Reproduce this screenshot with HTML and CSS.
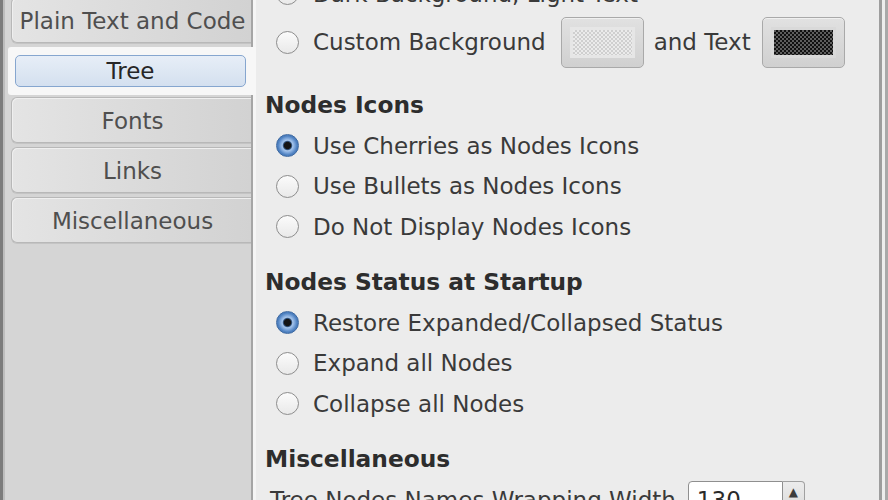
FILE: index.html
```html
<!DOCTYPE html>
<html>
<head>
<meta charset="utf-8">
<title>Preferences - Tree</title>
<link rel="stylesheet" href="styles.css">
</head>
<body>
<div class="window">
  <nav class="sidebar">
    <div class="tabs">
      <div class="tab">Plain Text and Code</div>
      <div class="tab active"><span class="focus">Tree</span></div>
      <div class="tab">Fonts</div>
      <div class="tab">Links</div>
      <div class="tab">Miscellaneous</div>
    </div>
  </nav>
  <main class="panel">
    <div class="scroll">
      <section class="group">
        <div class="radio-row"><span class="radio"></span><span>Dark Background, Light Text</span></div>
        <div class="radio-row tall">
          <span class="radio"></span><span>Custom Background</span>
          <span class="color-btn first-btn"><span class="swatch light"></span></span>
          <span class="and-text">and Text</span>
          <span class="color-btn second-btn"><span class="swatch dark"></span></span>
        </div>
      </section>
      <section class="group">
        <h2>Nodes Icons</h2>
        <div class="radio-row"><span class="radio on"></span><span>Use Cherries as Nodes Icons</span></div>
        <div class="radio-row"><span class="radio"></span><span>Use Bullets as Nodes Icons</span></div>
        <div class="radio-row"><span class="radio"></span><span>Do Not Display Nodes Icons</span></div>
      </section>
      <section class="group">
        <h2>Nodes Status at Startup</h2>
        <div class="radio-row"><span class="radio on"></span><span>Restore Expanded/Collapsed Status</span></div>
        <div class="radio-row"><span class="radio"></span><span>Expand all Nodes</span></div>
        <div class="radio-row"><span class="radio"></span><span>Collapse all Nodes</span></div>
      </section>
      <section class="group">
        <h2>Miscellaneous</h2>
        <div class="spin-row">
          <span>Tree Nodes Names Wrapping Width</span>
          <span class="spin"><span class="spin-entry">130</span><span class="spin-btn">&#9650;</span></span>
        </div>
      </section>
    </div>
  </main>
  <div class="edge"></div>
</div>
</body>
</html>
```

FILE: styles.css
```css
html, body {
  margin: 0;
  padding: 0;
}
body {
  width: 888px;
  height: 500px;
  overflow: hidden;
  background: #ececec;
  font-family: "DejaVu Sans", "Noto Sans", sans-serif;
  font-size: 23px;
  color: #3a3a3a;
}
.window {
  display: flex;
  height: 500px;
}
.sidebar {
  width: 248px;
  flex: none;
  background: #d5d5d5;
  border-left: 3px solid #7c7c7c;
  border-right: 2px solid #a5a5a5;
  box-shadow: inset 2px 0 0 #bdbdbd;
}
.tabs {
  display: flex;
  flex-direction: column;
  gap: 4px;
  margin-top: -3px;
  padding-left: 8px;
}
.tab {
  height: 46px;
  box-sizing: border-box;
  display: flex;
  align-items: center;
  justify-content: center;
  padding-top: 1px;
  padding-left: 2px;
  border: 1px solid #b8b8b8;
  border-right: none;
  border-radius: 6px 0 0 6px;
  background: linear-gradient(to right, #e4e4e4, #d2d2d2);
  box-shadow: inset 1px 1px 0 #efefef, 0 1px 0 #c4c4c4;
  color: #4f4f4f;
  white-space: nowrap;
}
.tab.active {
  position: relative;
  z-index: 1;
  border: none;
  box-shadow: none;
  background: #f7f7f7;
  margin-left: -3px;
  margin-right: -5px;
  height: 48px;
  margin-bottom: -2px;
  padding: 8px 10px 8px 7px;
  border-radius: 3px 0 0 3px;
}
.focus {
  flex: 1;
  height: 32px;
  box-sizing: border-box;
  display: flex;
  align-items: center;
  justify-content: center;
  border: 1px solid #86a6cf;
  border-radius: 5px;
  background: linear-gradient(#e7eef7, #d4e0ef);
  color: #262626;
}
.panel {
  flex: 1;
  overflow: hidden;
  border-right: 3px solid #9d9d9d;
  box-shadow: inset 3px 0 0 #f5f5f5;
}
.edge {
  width: 6px;
  flex: none;
  background: linear-gradient(to right, #ededed 0 3px, #a9a9a9 3px);
}
.scroll {
  margin-top: -26.5px;
  padding-left: 12px;
}
.group + .group {
  margin-top: 14px;
}
h2 {
  margin: 0;
  height: 41.5px;
  display: flex;
  align-items: center;
  font-size: 23.3px;
  font-weight: bold;
  color: #2d2d2d;
}
.radio-row {
  display: flex;
  align-items: center;
  height: 40.5px;
  padding-left: 11px;
  white-space: nowrap;
}
.radio-row.tall {
  height: 56px;
}
.radio {
  width: 23px;
  height: 23px;
  flex: none;
  box-sizing: border-box;
  border-radius: 50%;
  border: 1.5px solid #8d8d8d;
  background: linear-gradient(#fbfbfb, #e9e9e9);
  margin-right: 14px;
}
.radio.on {
  border-color: #3d68a0;
  background: radial-gradient(circle, #151515 0 3.2px, #34557f 4.2px, #a7c6ec 5.2px, #82aadd 7px, #4d80c0 9.5px);
}
.color-btn {
  width: 83px;
  height: 51px;
  flex: none;
  box-sizing: border-box;
  display: flex;
  align-items: center;
  justify-content: center;
  border: 1px solid #a9a9a9;
  border-radius: 5px;
  background: linear-gradient(#e1e1e1, #d0d0d0);
  box-shadow: inset 0 1px 0 #f0f0f0;
}
.first-btn {
  margin-left: 15px;
}
.and-text {
  margin-left: 10px;
  margin-right: 11px;
}
.swatch {
  width: 65px;
  height: 31px;
  box-sizing: border-box;
  border: 3px solid #e6e6e6;
}
.swatch.light {
  background: repeating-conic-gradient(#cfcfcf 0 25%, #ebebeb 0 50%) 0 0 / 4px 4px;
}
.swatch.dark {
  border-color: #d9d9d9;
  background: repeating-conic-gradient(#111111 0 25%, #5d5d5d 0 50%) 0 0 / 4px 4px;
}
.spin-row {
  display: flex;
  align-items: center;
  height: 40.5px;
  padding-left: 5px;
  white-space: nowrap;
}
.spin {
  display: flex;
  margin-left: 12px;
}
.spin-entry {
  width: 95px;
  height: 38px;
  box-sizing: border-box;
  display: flex;
  align-items: center;
  padding-left: 8px;
  border: 1px solid #8f8f8f;
  border-radius: 4px 0 0 4px;
  background: #ffffff;
  color: #2a2a2a;
}
.spin-btn {
  width: 22px;
  height: 38px;
  box-sizing: border-box;
  display: flex;
  justify-content: center;
  padding-top: 3px;
  border: 1px solid #a0a0a0;
  border-left: none;
  border-radius: 0 4px 0 0;
  background: linear-gradient(#ececec, #d6d6d6);
  font-size: 12px;
  color: #3c3c3c;
}
```
